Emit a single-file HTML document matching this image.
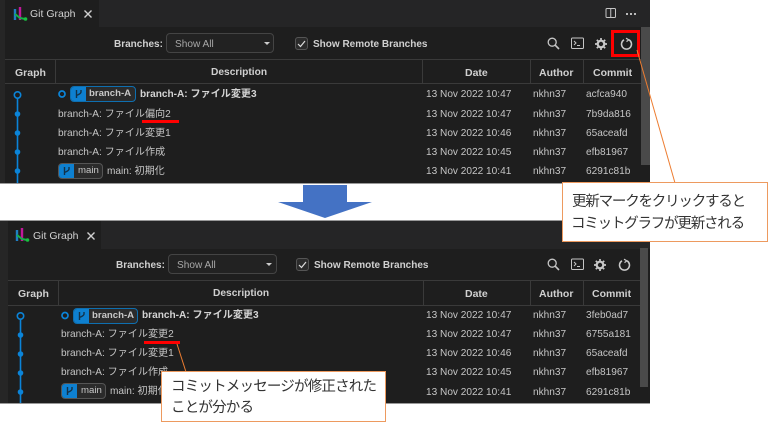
<!DOCTYPE html>
<html lang="ja"><head><meta charset="utf-8">
<style>
html,body{margin:0;padding:0;width:768px;height:429px;overflow:hidden;background:#fff}
body{position:relative;font-family:"Liberation Sans","Noto Sans CJK JP",sans-serif}
.a{position:absolute}
.p{position:absolute;background:#1e1e1e;overflow:hidden}
.t{position:absolute;white-space:nowrap;line-height:14px;height:14px;font-size:10.1px;color:#c6c6c6;margin-top:1px}
.b{font-weight:700;color:#d4d4d4}
.h{font-weight:700;color:#d0d0d0;font-size:10.5px}
.h2{font-weight:700;color:#d0d0d0;font-size:10px}
.l{position:absolute;background:#3a3a3a}
.tag{position:absolute;box-sizing:border-box;height:16px;border-radius:4px;border:1px solid #555;background:#2b2b2b;overflow:hidden}
.tag i{position:absolute;left:0;top:0;bottom:0;width:15px;background:#0e80d0}
.tag span{position:absolute;top:0;line-height:14px;font-size:9.6px;font-weight:700;color:#c8c8c8}
svg{position:absolute;overflow:visible}
.co{position:absolute;white-space:nowrap;height:20px;line-height:20px;color:#333}
</style></head><body>

<!-- PANEL 1 -->
<div class="p" style="left:0;top:0;width:650px;height:183px">
  <div class="a" style="left:0;top:0;width:650px;height:27px;background:#252526"></div>
  <div class="a" style="left:0;top:0;width:5px;height:183px;background:#262626"></div>
  <div class="a" style="left:5px;top:0;width:94px;height:27px;background:#1e1e1e"></div>
  <svg style="left:13px;top:6px" width="16" height="16" viewBox="0 0 16 16" fill="none">
    <path d="M2 3V14" stroke="#1f7fc4" stroke-width="2.4"/><path d="M7 1V14" stroke="#c0189a" stroke-width="2.4"/><path d="M2 8L7 12L12 13" stroke="#16b04a" stroke-width="2"/><circle cx="12.5" cy="13" r="1.8" fill="#18c040"/>
  </svg>
  <div class="t" style="left:30px;top:6px;font-size:10.5px;color:#d2d2d2">Git Graph</div>
  <svg style="left:83px;top:9px" width="10" height="10" viewBox="0 0 10 10"><path d="M1.5 1.5L8.5 8.5M8.5 1.5L1.5 8.5" stroke="#d0d0d0" stroke-width="1.4"/></svg>
  <svg style="left:605px;top:7px" width="12" height="12" viewBox="0 0 12 12" fill="none"><rect x="1" y="1.5" width="9.5" height="9" rx="1" stroke="#c5c5c5"/><path d="M5.75 1.5V10.5" stroke="#c5c5c5"/></svg>
  <div class="a" style="left:626px;top:12.5px;width:2px;height:2px;background:#bbb;box-shadow:4px 0 #bbb,8px 0 #bbb"></div>

  <div class="t h2" style="left:114px;top:37px">Branches:</div>
  <div class="a" style="left:166px;top:33px;width:108px;height:20px;box-sizing:border-box;border:1px solid #444;border-radius:4px;background:#222"></div>
  <div class="t" style="left:175px;top:37px;color:#a8a8a8">Show All</div>
  <div class="a" style="left:264px;top:42px;width:0;height:0;border:3px solid transparent;border-top:3px solid #ccc"></div>
  <div class="a" style="left:295px;top:37px;width:13px;height:13px;box-sizing:border-box;border:1px solid #555;border-radius:3px;background:#2b2b2b"></div>
  <svg style="left:297px;top:39px" width="9" height="9" viewBox="0 0 9 9"><path d="M1 5L3.5 7.5L8 2" stroke="#ddd" stroke-width="1.2" fill="none"/></svg>
  <div class="t h2" style="left:313px;top:37px">Show Remote Branches</div>

  <svg style="left:547px;top:37px" width="13" height="13" viewBox="0 0 13 13" fill="none"><circle cx="5.2" cy="5.2" r="4" stroke="#c5c5c5" stroke-width="1.3"/><path d="M8.2 8.2L12 12" stroke="#c5c5c5" stroke-width="1.6"/></svg>
  <svg style="left:571px;top:37px" width="13" height="13" viewBox="0 0 13 13" fill="none"><rect x=".5" y="1" width="12" height="10.5" rx="1" stroke="#c5c5c5"/><path d="M3 4L5 6L3 8M6 8.5H9" stroke="#c5c5c5"/></svg>
  <svg style="left:595px;top:38px" width="12" height="12" viewBox="0 0 12 12" fill="none"><circle cx="6" cy="6" r="3.3" stroke="#c8c8c8" stroke-width="2.2"/><path d="M6 0V2M6 10V12M0 6H2M10 6H12M1.8 1.8L3.2 3.2M8.8 8.8L10.2 10.2M10.2 1.8L8.8 3.2M3.2 8.8L1.8 10.2" stroke="#c8c8c8" stroke-width="1.7"/></svg>
  <svg style="left:620px;top:37px" width="13" height="13" viewBox="0 0 13 13" fill="none"><path d="M4 2.8A5 5 0 1 0 9 2.8" stroke="#c8c8c8" stroke-width="1.5"/><path d="M6 1.2L8.8 2.8L6.5 4.6" stroke="#c8c8c8" stroke-width="1.2"/></svg>

  <div class="l" style="left:5px;top:59px;width:636px;height:1px"></div>
  <div class="l" style="left:5px;top:83px;width:636px;height:1px"></div>
  <div class="l" style="left:55px;top:60px;width:1px;height:23px"></div>
  <div class="l" style="left:422px;top:60px;width:1px;height:23px"></div>
  <div class="l" style="left:530px;top:60px;width:1px;height:23px"></div>
  <div class="l" style="left:583px;top:60px;width:1px;height:23px"></div>
  <div class="a" style="left:641px;top:27px;width:9px;height:138px;background:#4a4a4a"></div>

  <div class="t h" style="left:15px;top:65px">Graph</div>
  <div class="t h" style="left:211px;top:65px;font-size:10.2px">Description</div>
  <div class="t h" style="left:465px;top:65px">Date</div>
  <div class="t h" style="left:539px;top:65px">Author</div>
  <div class="t h" style="left:593px;top:65px">Commit</div>

  <svg style="left:0;top:0" width="70" height="183" fill="none">
    <path d="M17.5 98V183" stroke="#0b84d8" stroke-width="1.6"/>
    <circle cx="17.5" cy="95" r="3.2" stroke="#0b84d8" stroke-width="1.6"/>
    <circle cx="17.5" cy="114" r="2.8" fill="#0b84d8"/><circle cx="17.5" cy="133" r="2.8" fill="#0b84d8"/><circle cx="17.5" cy="152" r="2.8" fill="#0b84d8"/><circle cx="17.5" cy="171" r="2.8" fill="#0b84d8"/>
    <circle cx="62" cy="94" r="3" stroke="#0b84d8" stroke-width="1.7"/>
  </svg>
  <div class="tag" style="left:70px;top:86px;width:66px;border-color:#0e6fb0"><i></i><svg style="left:3px;top:2px" width="9" height="10" viewBox="0 0 9 10" fill="none"><path d="M2.5 1V9M7 1V3C7 5 4 5.5 2.5 6.5" stroke="#12324a" stroke-width="1.4"/></svg><span style="left:18px">branch-A</span></div>
  <div class="t b" style="left:140px;top:87px">branch-A: ファイル変更3</div>
  <div class="t" style="left:58px;top:107px">branch-A: ファイル偏向2</div>
  <div class="t" style="left:58px;top:126px">branch-A: ファイル変更1</div>
  <div class="t" style="left:58px;top:145px">branch-A: ファイル作成</div>
  <div class="tag" style="left:58px;top:163px;width:45px"><i></i><svg style="left:3px;top:2px" width="9" height="10" viewBox="0 0 9 10" fill="none"><path d="M2.5 1V9M7 1V3C7 5 4 5.5 2.5 6.5" stroke="#12324a" stroke-width="1.4"/></svg><span style="left:19px;font-weight:400">main</span></div>
  <div class="t" style="left:107px;top:164px">main: 初期化</div>

  <div class="t" style="left:426px;top:87px">13 Nov 2022 10:47</div><div class="t" style="left:533px;top:87px">nkhn37</div><div class="t" style="left:586px;top:87px">acfca940</div>
  <div class="t" style="left:426px;top:107px">13 Nov 2022 10:47</div><div class="t" style="left:533px;top:107px">nkhn37</div><div class="t" style="left:586px;top:107px">7b9da816</div>
  <div class="t" style="left:426px;top:126px">13 Nov 2022 10:46</div><div class="t" style="left:533px;top:126px">nkhn37</div><div class="t" style="left:586px;top:126px">65aceafd</div>
  <div class="t" style="left:426px;top:145px">13 Nov 2022 10:45</div><div class="t" style="left:533px;top:145px">nkhn37</div><div class="t" style="left:586px;top:145px">efb81967</div>
  <div class="t" style="left:426px;top:164px">13 Nov 2022 10:41</div><div class="t" style="left:533px;top:164px">nkhn37</div><div class="t" style="left:586px;top:164px">6291c81b</div>
</div>
<div class="a" style="left:0;top:183px;width:650px;height:1px;background:#999"></div>
<div class="a" style="left:142px;top:120px;width:37px;height:3px;background:#f00"></div>

<!-- PANEL 2 -->
<div class="p" style="left:0;top:221px;width:650px;height:182px">
  <div class="a" style="left:0;top:0;width:650px;height:28px;background:#252526"></div>
  <div class="a" style="left:0;top:0;width:8px;height:182px;background:#262626"></div>
  <div class="a" style="left:8px;top:0;width:93px;height:28px;background:#1e1e1e"></div>
  <svg style="left:15px;top:6px" width="16" height="16" viewBox="0 0 16 16" fill="none">
    <path d="M2 3V14" stroke="#1f7fc4" stroke-width="2.4"/><path d="M7 1V14" stroke="#c0189a" stroke-width="2.4"/><path d="M2 8L7 12L12 13" stroke="#16b04a" stroke-width="2"/><circle cx="12.5" cy="13" r="1.8" fill="#18c040"/>
  </svg>
  <div class="t" style="left:33px;top:7px;font-size:10.5px;color:#d2d2d2">Git Graph</div>
  <svg style="left:86px;top:10px" width="10" height="10" viewBox="0 0 10 10"><path d="M1.5 1.5L8.5 8.5M8.5 1.5L1.5 8.5" stroke="#d0d0d0" stroke-width="1.4"/></svg>

  <div class="t h2" style="left:116px;top:37px">Branches:</div>
  <div class="a" style="left:168px;top:33px;width:109px;height:20px;box-sizing:border-box;border:1px solid #444;border-radius:4px;background:#222"></div>
  <div class="t" style="left:177px;top:37px;color:#a8a8a8">Show All</div>
  <div class="a" style="left:266px;top:42px;width:0;height:0;border:3px solid transparent;border-top:3px solid #ccc"></div>
  <div class="a" style="left:296px;top:37px;width:13px;height:13px;box-sizing:border-box;border:1px solid #555;border-radius:3px;background:#2b2b2b"></div>
  <svg style="left:298px;top:39px" width="9" height="9" viewBox="0 0 9 9"><path d="M1 5L3.5 7.5L8 2" stroke="#ddd" stroke-width="1.2" fill="none"/></svg>
  <div class="t h2" style="left:314px;top:37px">Show Remote Branches</div>

  <svg style="left:547px;top:37px" width="13" height="13" viewBox="0 0 13 13" fill="none"><circle cx="5.2" cy="5.2" r="4" stroke="#c5c5c5" stroke-width="1.3"/><path d="M8.2 8.2L12 12" stroke="#c5c5c5" stroke-width="1.6"/></svg>
  <svg style="left:571px;top:37px" width="13" height="13" viewBox="0 0 13 13" fill="none"><rect x=".5" y="1" width="12" height="10.5" rx="1" stroke="#c5c5c5"/><path d="M3 4L5 6L3 8M6 8.5H9" stroke="#c5c5c5"/></svg>
  <svg style="left:594px;top:38px" width="12" height="12" viewBox="0 0 12 12" fill="none"><circle cx="6" cy="6" r="3.3" stroke="#c8c8c8" stroke-width="2.2"/><path d="M6 0V2M6 10V12M0 6H2M10 6H12M1.8 1.8L3.2 3.2M8.8 8.8L10.2 10.2M10.2 1.8L8.8 3.2M3.2 8.8L1.8 10.2" stroke="#c8c8c8" stroke-width="1.7"/></svg>
  <svg style="left:618px;top:37px" width="13" height="13" viewBox="0 0 13 13" fill="none"><path d="M4 2.8A5 5 0 1 0 9 2.8" stroke="#c8c8c8" stroke-width="1.5"/><path d="M6 1.2L8.8 2.8L6.5 4.6" stroke="#c8c8c8" stroke-width="1.2"/></svg>

  <div class="l" style="left:8px;top:59px;width:632px;height:1px"></div>
  <div class="l" style="left:8px;top:84px;width:632px;height:1px"></div>
  <div class="l" style="left:58px;top:60px;width:1px;height:24px"></div>
  <div class="l" style="left:423px;top:60px;width:1px;height:24px"></div>
  <div class="l" style="left:530px;top:60px;width:1px;height:24px"></div>
  <div class="l" style="left:583px;top:60px;width:1px;height:24px"></div>
  <div class="a" style="left:640px;top:27px;width:8px;height:139px;background:#4a4a4a"></div>

  <div class="t h" style="left:18px;top:65px">Graph</div>
  <div class="t h" style="left:213px;top:65px;font-size:10.2px">Description</div>
  <div class="t h" style="left:465px;top:65px">Date</div>
  <div class="t h" style="left:539px;top:65px">Author</div>
  <div class="t h" style="left:592px;top:65px">Commit</div>

  <svg style="left:0;top:0" width="70" height="182" fill="none">
    <path d="M20.5 98V182" stroke="#0b84d8" stroke-width="1.6"/>
    <circle cx="20.5" cy="95" r="3.2" stroke="#0b84d8" stroke-width="1.6"/>
    <circle cx="20.5" cy="114" r="2.8" fill="#0b84d8"/><circle cx="20.5" cy="133" r="2.8" fill="#0b84d8"/><circle cx="20.5" cy="152" r="2.8" fill="#0b84d8"/><circle cx="20.5" cy="171" r="2.8" fill="#0b84d8"/>
    <circle cx="65" cy="94.5" r="3" stroke="#0b84d8" stroke-width="1.7"/>
  </svg>
  <div class="tag" style="left:73px;top:87px;width:65px;border-color:#0e6fb0"><i></i><svg style="left:3px;top:2px" width="9" height="10" viewBox="0 0 9 10" fill="none"><path d="M2.5 1V9M7 1V3C7 5 4 5.5 2.5 6.5" stroke="#12324a" stroke-width="1.4"/></svg><span style="left:18px">branch-A</span></div>
  <div class="t b" style="left:142px;top:87px">branch-A: ファイル変更3</div>
  <div class="t" style="left:61px;top:106px">branch-A: ファイル変更2</div>
  <div class="t" style="left:61px;top:125px">branch-A: ファイル変更1</div>
  <div class="t" style="left:61px;top:144px">branch-A: ファイル作成</div>
  <div class="tag" style="left:61px;top:162px;width:45px"><i></i><svg style="left:3px;top:2px" width="9" height="10" viewBox="0 0 9 10" fill="none"><path d="M2.5 1V9M7 1V3C7 5 4 5.5 2.5 6.5" stroke="#12324a" stroke-width="1.4"/></svg><span style="left:19px;font-weight:400">main</span></div>
  <div class="t" style="left:110px;top:163px">main: 初期化</div>

  <div class="t" style="left:426px;top:87px">13 Nov 2022 10:47</div><div class="t" style="left:533px;top:87px">nkhn37</div><div class="t" style="left:586px;top:87px">3feb0ad7</div>
  <div class="t" style="left:426px;top:106px">13 Nov 2022 10:47</div><div class="t" style="left:533px;top:106px">nkhn37</div><div class="t" style="left:586px;top:106px">6755a181</div>
  <div class="t" style="left:426px;top:125px">13 Nov 2022 10:46</div><div class="t" style="left:533px;top:125px">nkhn37</div><div class="t" style="left:586px;top:125px">65aceafd</div>
  <div class="t" style="left:426px;top:144px">13 Nov 2022 10:45</div><div class="t" style="left:533px;top:144px">nkhn37</div><div class="t" style="left:586px;top:144px">efb81967</div>
  <div class="t" style="left:426px;top:164px">13 Nov 2022 10:41</div><div class="t" style="left:533px;top:164px">nkhn37</div><div class="t" style="left:586px;top:164px">6291c81b</div>
</div>
<div class="a" style="left:0;top:220px;width:650px;height:1px;background:#999"></div>
<div class="a" style="left:0;top:403px;width:650px;height:1px;background:#999"></div>
<div class="a" style="left:144px;top:341px;width:36px;height:3px;background:#f00"></div>

<!-- Blue arrow -->
<svg style="left:278px;top:185px" width="94" height="34" viewBox="0 0 94 34"><path d="M25 0H69V17H94L47 33L0 17H25Z" fill="#4472c4"/></svg>

<!-- Red highlight and callout lines -->
<div class="a" style="left:611px;top:30px;width:29px;height:27px;box-sizing:border-box;border:3px solid #f00"></div>
<svg style="left:0;top:0" width="768" height="429" fill="none">
  <path d="M637 50L675 183" stroke="#ed7d31" stroke-width="1"/>
  <path d="M177 344L186 372" stroke="#ed7d31" stroke-width="1"/>
</svg>

<!-- Callouts -->
<div class="a" style="left:562px;top:182px;width:206px;height:60px;box-sizing:border-box;border:1px solid #ed9a5f;background:#fff"></div>
<div class="co" style="left:572px;top:192px;font-size:14.5px;letter-spacing:-1.2px">更新マークをクリックすると</div>
<div class="co" style="left:571px;top:214px;font-size:14.5px;letter-spacing:-1.2px">コミットグラフが更新される</div>

<div class="a" style="left:161px;top:371px;width:225px;height:51px;box-sizing:border-box;border:1px solid #ed9a5f;background:#fff"></div>
<div class="co" style="left:171px;top:377px;font-size:14.5px;letter-spacing:-.8px">コミットメッセージが修正された</div>
<div class="co" style="left:171px;top:398px;font-size:14.5px;letter-spacing:-.8px">ことが分かる</div>

</body></html>
